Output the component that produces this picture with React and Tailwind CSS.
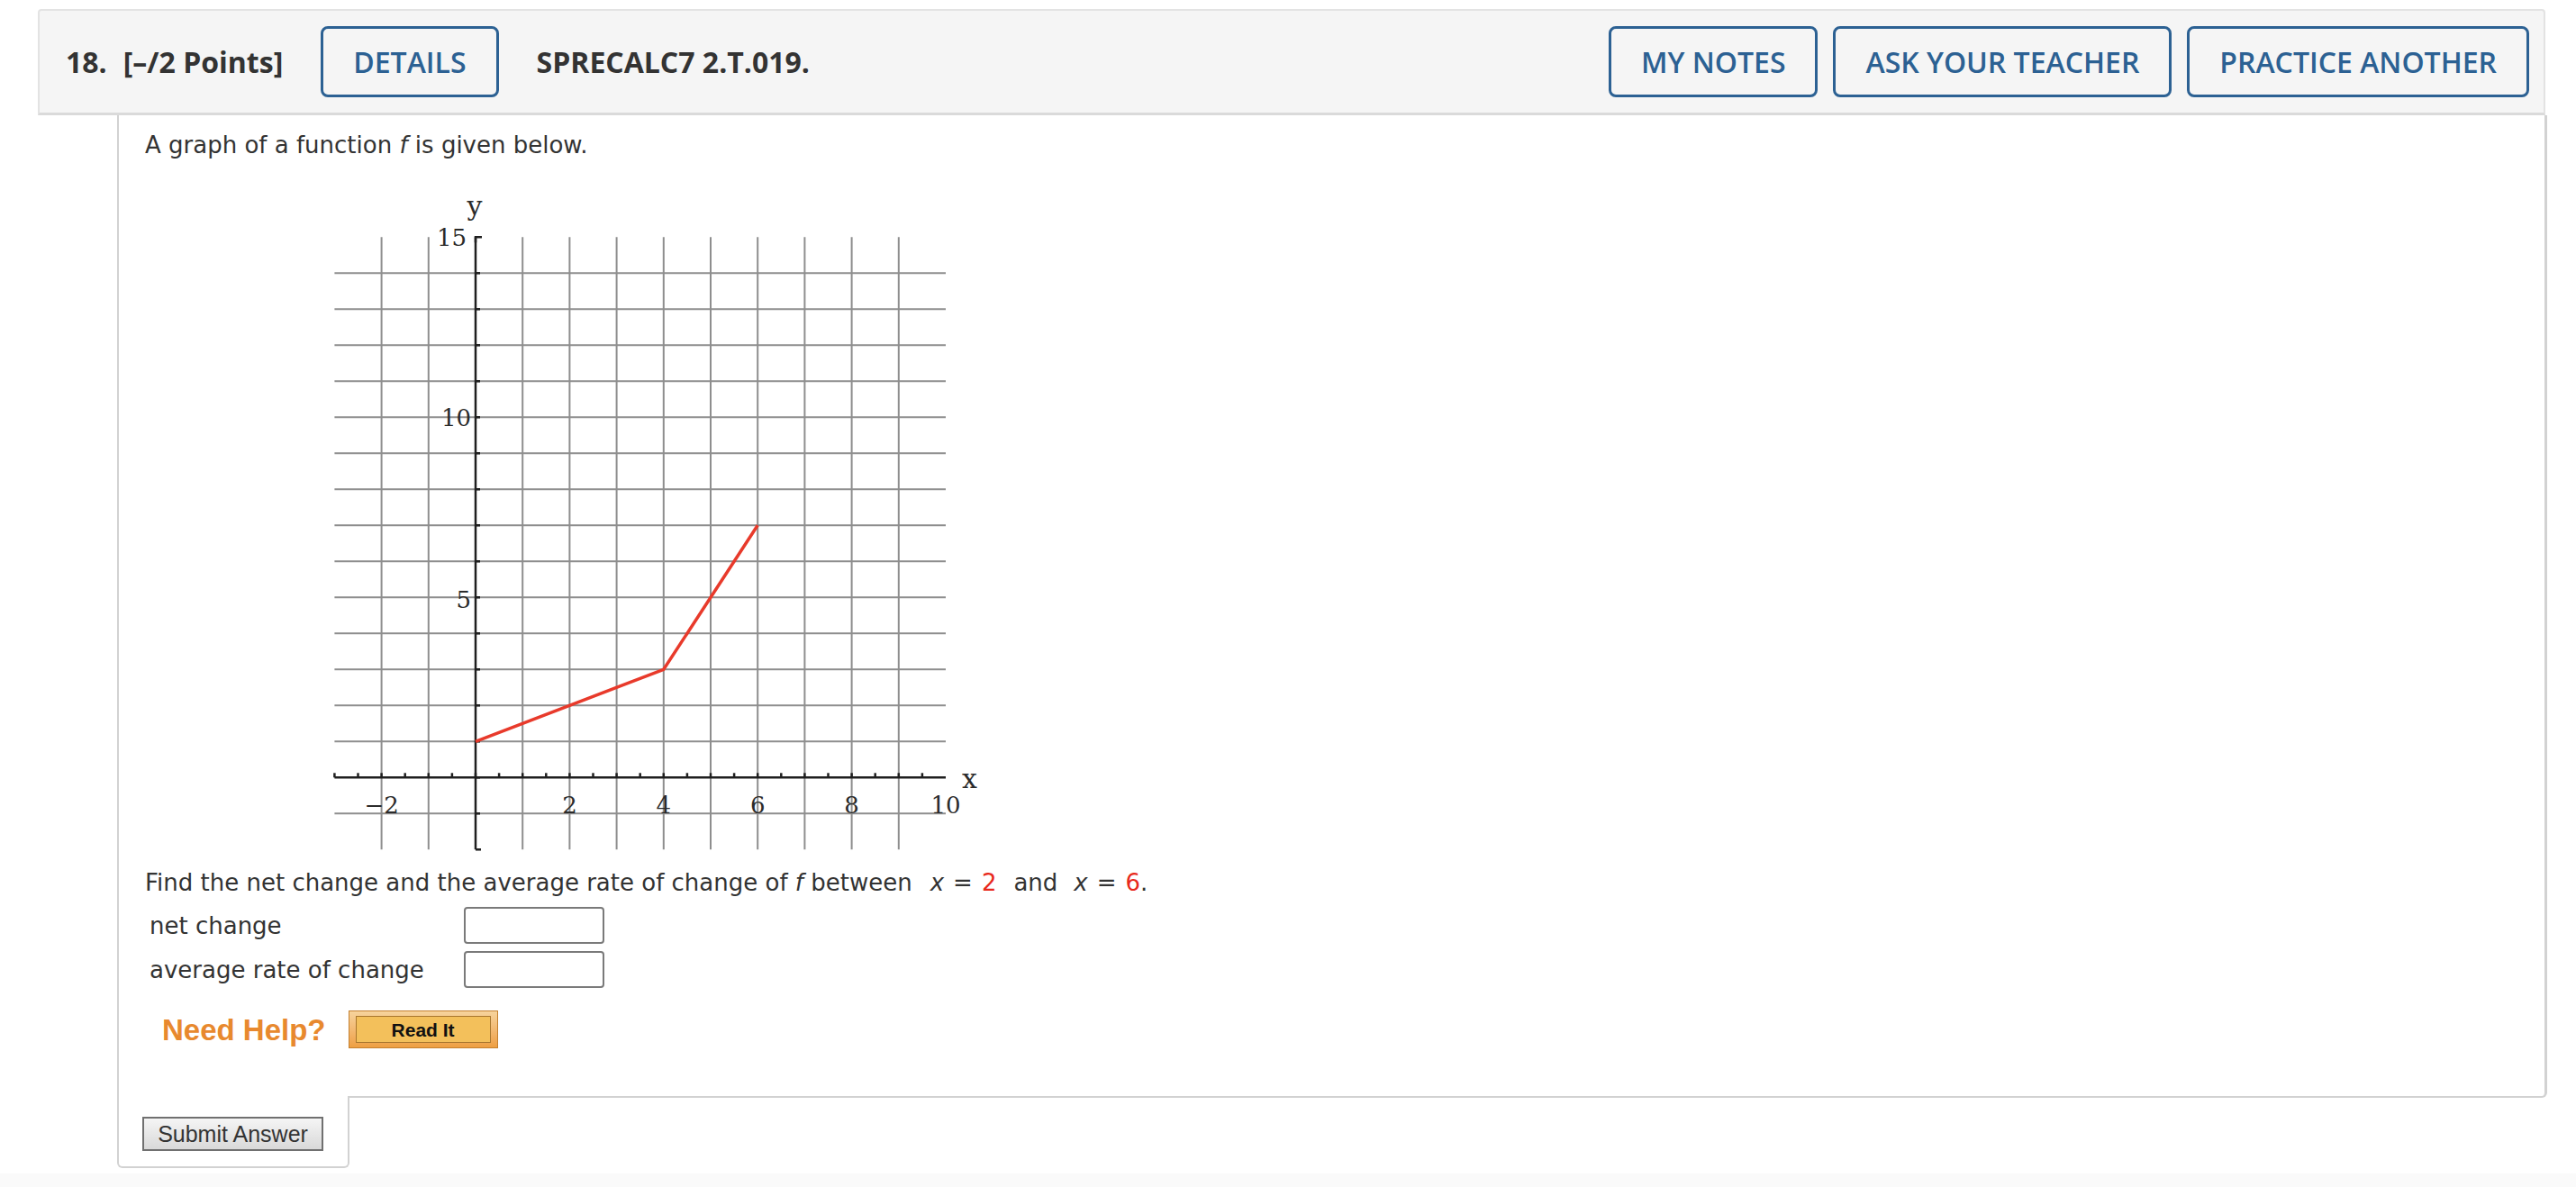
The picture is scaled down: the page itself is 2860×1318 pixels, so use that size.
import React from "react";

// graph coordinates -> svg pixels
const X = (x) => 168 + 52.2 * x;
const Y = (y) => 648.3 - 40 * y;

const FunctionGraph = () => {
  const gridX = [-2, -1, 1, 2, 3, 4, 5, 6, 7, 8, 9];
  const gridY = [-1, 1, 2, 3, 4, 5, 6, 7, 8, 9, 10, 11, 12, 13, 14];
  const halfTicks = [];
  for (let i = -6; i <= 19; i++) halfTicks.push(i / 2);
  const yTicks = [];
  for (let i = -1; i <= 14; i++) yTicks.push(i);

  return (
    <svg className="block ml-[199px] mt-[36px] overflow-visible" width="740" height="742">
      {/* grid */}
      <g stroke="#8e8e8e" strokeWidth="2">
        {gridX.map((x) => (
          <line key={"gx" + x} x1={X(x)} y1={Y(15)} x2={X(x)} y2={Y(-2)} />
        ))}
        {gridY.map((y) => (
          <line key={"gy" + y} x1={X(-3)} y1={Y(y)} x2={X(10)} y2={Y(y)} />
        ))}
      </g>

      {/* axes */}
      <g stroke="#1f1f1f" strokeWidth="2.5" fill="none">
        <line x1={X(-3)} y1={Y(0)} x2={X(10)} y2={Y(0)} />
        <line x1={X(0)} y1={Y(15)} x2={X(0)} y2={Y(-2)} />
        {halfTicks.map((t) => (
          <line key={"tx" + t} x1={X(t)} y1={Y(0)} x2={X(t)} y2={Y(0) - (t === 10 ? 8 : 5)} />
        ))}
        {yTicks.map((t) => (
          <line key={"ty" + t} x1={X(0)} y1={Y(t)} x2={X(0) + 5} y2={Y(t)} />
        ))}
        <polyline points={`${X(0)},${Y(15) + 6} ${X(0)},${Y(15)} ${X(0) + 7},${Y(15)}`} />
        <line x1={X(0)} y1={Y(-2)} x2={X(0) + 6} y2={Y(-2)} />
      </g>

      {/* f(x) */}
      <polyline
        points={`${X(0)},${Y(1)} ${X(4)},${Y(3)} ${X(6)},${Y(7)}`}
        fill="none"
        stroke="#e83a2b"
        strokeWidth="3.5"
        strokeLinejoin="round"
      />

      {/* labels */}
      <g fill="#2b2b2b" fontFamily="'DejaVu Serif', serif" fontSize="26">
        <text x="158" y="58" textAnchor="end">15</text>
        <text x="163" y="258" textAnchor="end">10</text>
        <text x="163" y="460" textAnchor="end">5</text>
        {[-2, 2, 4, 6, 8, 10].map((k) => (
          <text key={"lx" + k} x={X(k)} y="688" textAnchor="middle">
            {k < 0 ? "\u2212" + Math.abs(k) : k}
          </text>
        ))}
        <text x="708" y="660" fontSize="30">x</text>
        <text x="167" y="24" fontSize="30" textAnchor="middle">y</text>
      </g>
    </svg>
  );
};

const OutlineButton = ({ children }) => (
  <button className="h-[79px] px-[33px] border-[3px] border-[#2c6193] rounded-[8px] text-[#2c6193] text-[32px] font-semibold leading-none whitespace-nowrap">
    {children}
  </button>
);

const App = () => {
  return (
    <div className="min-h-screen bg-white text-[#333] font-['DejaVu_Sans',Verdana,sans-serif]">
      {/* question header */}
      <div className="ml-[42px] mr-[34px] mt-[10px] h-[118px] flex items-center bg-[#f5f5f5] border-2 border-[#e3e3e3] border-b-[3px] border-b-[#dadada] rounded-t-[4px] pl-[29px] pr-[16px] font-['Open_Sans',sans-serif]">
        <span className="text-[32px] font-bold text-[#333] whitespace-nowrap">
          18.<span className="ml-[18px]">[–/2 Points]</span>
        </span>
        <div className="ml-[42px]">
          <OutlineButton>DETAILS</OutlineButton>
        </div>
        <span className="ml-[42px] text-[32px] font-bold text-[#333] whitespace-nowrap">SPRECALC7 2.T.019.</span>
        <div className="ml-auto flex gap-[17px]">
          <OutlineButton>MY NOTES</OutlineButton>
          <OutlineButton>ASK YOUR TEACHER</OutlineButton>
          <OutlineButton>PRACTICE ANOTHER</OutlineButton>
        </div>
      </div>

      {/* question body */}
      <div className="ml-[130px] mr-[32px]">
        <div className="border-l-2 border-r-[3px] border-b-2 border-[#d2d2d2] rounded-br-[6px] pl-[29px] pt-[15px] pb-[53px] text-[26px] leading-[36px]">
          <p>
            A graph of a function <i>f</i> is given below.
          </p>

          <FunctionGraph />

          <p className="mt-[5px]">
            Find the net change and the average rate of change of <i>f</i> between
            <i className="ml-[20px]">x</i>
            <span className="mx-[10px]">=</span>
            <span className="text-[#e8291c]">2</span>
            <span className="ml-[19px]">and</span>
            <i className="ml-[18px]">x</i>
            <span className="mx-[10px]">=</span>
            <span className="text-[#e8291c]">6</span>.
          </p>

          <div className="mt-[9px] grid grid-cols-[354px_auto] gap-y-[8px] items-center w-max">
            <span className="pl-[5px]">net change</span>
            <input className="w-[156px] h-[41px] border-2 border-[#7a7a7a] rounded-[4px] bg-white" />
            <span className="pl-[5px]">average rate of change</span>
            <input className="w-[156px] h-[41px] border-2 border-[#7a7a7a] rounded-[4px] bg-white" />
          </div>

          <div className="mt-[25px] pl-[19px] flex items-center gap-[25px] font-['Liberation_Sans',Arial,sans-serif]">
            <span className="text-[33px] leading-none font-bold text-[#e8892e]">Need Help?</span>
            <button className="h-[42px] w-[166px] p-[5px_7px] border border-[#c4802f] bg-linear-to-b from-[#f6d39c] to-[#ee9f42]">
              <span className="h-full flex items-center justify-center border border-[#a8772f] bg-[#f3c05b] text-[21px] font-bold text-[#111] leading-none">
                Read It
              </span>
            </button>
          </div>
        </div>

        {/* submit tab */}
        <div className="relative -mt-[2px] w-[258px] h-[80px] border-x-2 border-b-2 border-[#d2d2d2] rounded-b-[6px] bg-white pl-[26px] pt-[23px]">
          <button className="w-[201px] h-[38px] border-2 border-[#707070] bg-linear-to-b from-[#f5f5f5] to-[#d9d9d9] text-[25px] text-[#333] leading-none font-['Liberation_Sans',Arial,sans-serif]">
            Submit Answer
          </button>
        </div>
      </div>
      <div className="mt-[6px] h-[15px] bg-[#fafafa]" />
    </div>
  );
};

export default App;
